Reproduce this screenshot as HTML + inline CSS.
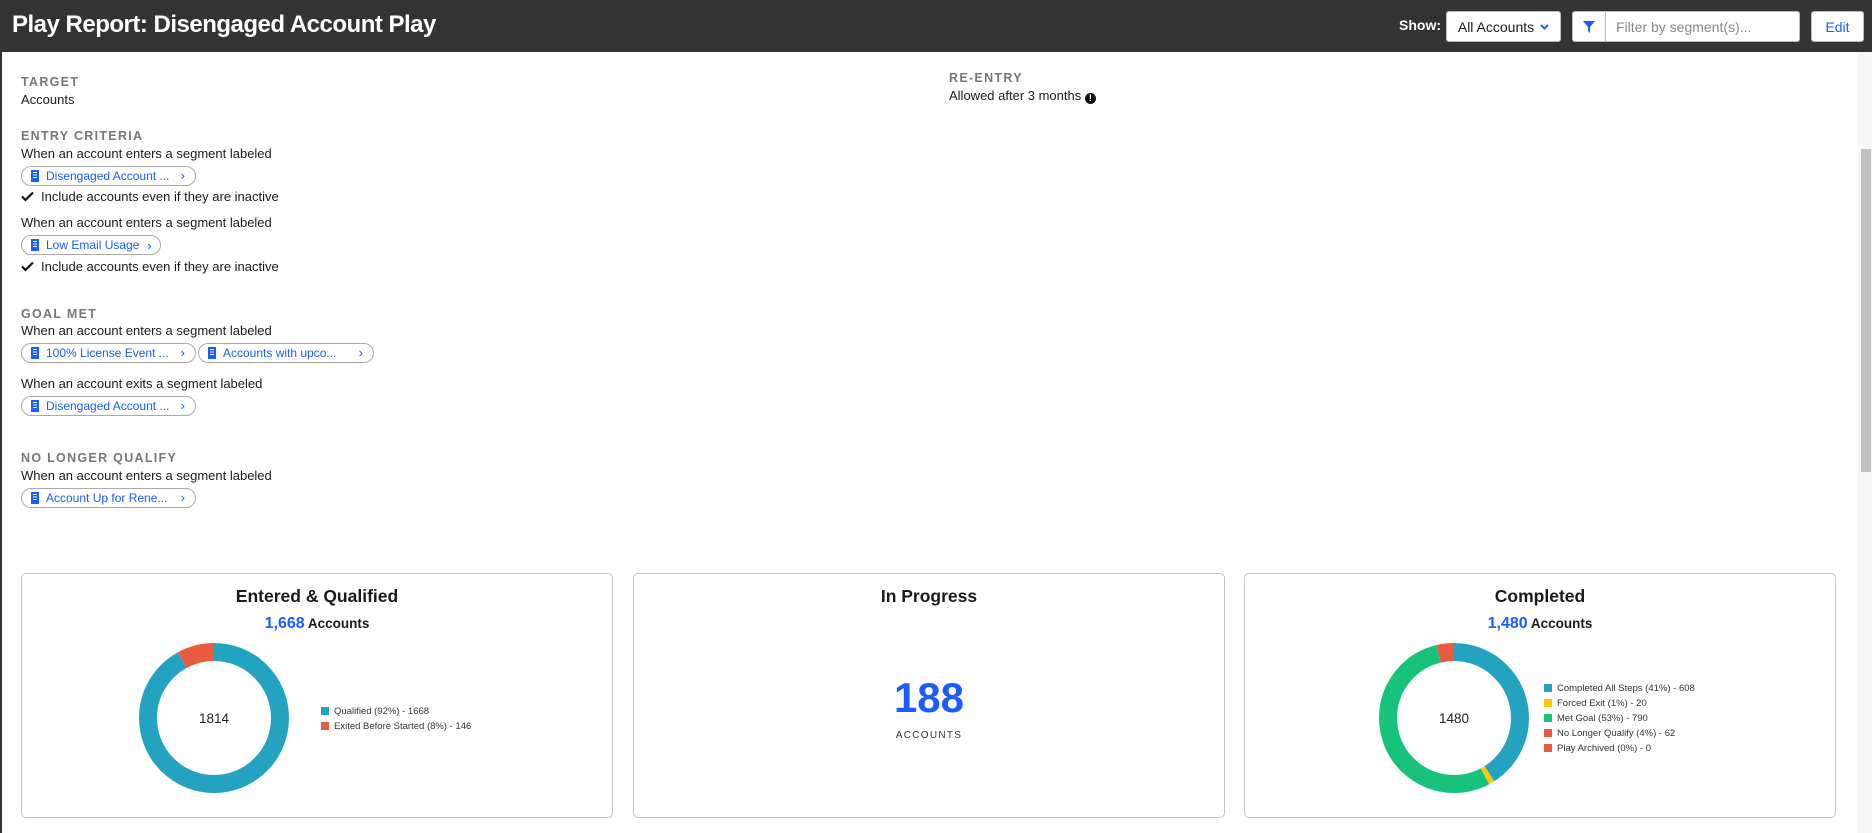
<!DOCTYPE html>
<html><head><meta charset="utf-8"><style>
*{box-sizing:border-box;margin:0;padding:0}
body{width:1872px;height:833px;overflow:hidden;background:#fff;font-family:"Liberation Sans",sans-serif;color:#1a1a1a;position:relative}
.hdr{position:absolute;left:0;top:0;width:1872px;height:52px;background:#333}
.title{position:absolute;left:12px;top:11px;color:#fff;font-size:24px;font-weight:bold;letter-spacing:-0.5px}
.show{position:absolute;left:1399px;top:17px;color:#fff;font-size:14px;font-weight:bold}
.btn{position:absolute;top:11px;height:31px;background:#fff;border:1px solid #bbb;border-radius:3px;font-size:14px;display:flex;align-items:center;justify-content:center}
.lbl{position:absolute;font-size:12.5px;letter-spacing:1.3px;color:#777;font-weight:bold}
.txt{position:absolute;font-size:13px;color:#1a1a1a}
.pill{position:absolute;height:20px;border:1px solid #aaa;border-radius:10px;font-size:12px;color:#1a5cff;display:flex;align-items:center;padding-left:9px}
.pill .ic{width:8px;height:12px;background:#1a5cff;margin-right:7px;position:relative}
.pill .ic:after{content:"";position:absolute;left:2px;top:2px;width:4px;height:7px;background:repeating-linear-gradient(#fff 0 1px,#1a5cff 1px 2.5px)}
.pill .ch{position:absolute;right:10px;top:1px;font-size:13px}
.pill .ch2{margin-left:8px;font-size:13px}
.ck{display:inline-block;vertical-align:-1px;margin-right:7px}
.card{position:absolute;top:573px;width:592px;height:245px;border:1px solid #c4c4c4;border-radius:5px}
.ct{position:absolute;top:12px;width:100%;text-align:center;font-size:17.5px;font-weight:bold}
.cs{position:absolute;top:41px;width:100%;text-align:center;font-size:13.5px;font-weight:bold}
.cs b{color:#1a5cff;font-size:16px}
.leg{position:absolute;font-size:9.5px;color:#333;line-height:15px}
.leg i{display:inline-block;width:8px;height:8px;margin-right:5px;vertical-align:-0.5px}
</style></head><body>
<div style="position:absolute;left:0;top:52px;width:2px;height:781px;background:#333"></div>
<div class="hdr">
<div class="title">Play Report: Disengaged Account Play</div>
<div class="show">Show:</div>
<div class="btn" style="left:1446px;width:115px">All Accounts <svg style="margin-left:6px" width="9" height="6" viewBox="0 0 9 6"><path d="M1 1L4.5 4.5L8 1" stroke="#1a5cff" stroke-width="2" fill="none"/></svg></div>
<div class="btn" style="left:1572px;width:228px;justify-content:flex-start">
<div style="width:33px;height:100%;border-right:1px solid #bbb;display:flex;align-items:center;justify-content:center"><svg width="12" height="12" viewBox="0 0 12 12"><path d="M0 0H12L7 6V12L5 10V6Z" fill="#1a5cff"/></svg></div>
<span style="color:#888;margin-left:10px">Filter by segment(s)...</span></div>
<div class="btn" style="left:1811px;width:53px;color:#1a5cff">Edit</div>
</div>
<div style="position:absolute;left:1858px;top:52px;width:14px;height:781px;background:#f6f6f6"></div>
<div style="position:absolute;left:1861px;top:149px;width:10px;height:323px;background:#c1c1c1"></div>

<div class="lbl" style="left:21px;top:75px">TARGET</div>
<div class="txt" style="left:21px;top:92px">Accounts</div>
<div class="lbl" style="left:949px;top:71px">RE-ENTRY</div>
<div class="txt" style="left:949px;top:88px">Allowed after 3 months <span style="display:inline-block;width:11px;height:11px;border-radius:50%;background:#111;color:#fff;font-size:9px;text-align:center;line-height:11px;font-weight:bold;vertical-align:-1px">!</span></div>

<div class="lbl" style="left:21px;top:129px">ENTRY CRITERIA</div>
<div class="txt" style="left:21px;top:146px">When an account enters a segment labeled</div>
<div class="pill" style="left:21px;top:166px;width:175px"><span class="ic"></span>Disengaged Account ...<span class="ch">&#8250;</span></div>
<div class="txt" style="left:21px;top:189px"><svg class="ck" width="13" height="11" viewBox="0 0 13 11"><path d="M1 5.5L4.5 9L12 1.5" stroke="#111" stroke-width="2.2" fill="none"/></svg>Include accounts even if they are inactive</div>
<div class="txt" style="left:21px;top:215px">When an account enters a segment labeled</div>
<div class="pill" style="left:21px;top:235px;width:140px"><span class="ic"></span>Low Email Usage<span class="ch2">&#8250;</span></div>
<div class="txt" style="left:21px;top:259px"><svg class="ck" width="13" height="11" viewBox="0 0 13 11"><path d="M1 5.5L4.5 9L12 1.5" stroke="#111" stroke-width="2.2" fill="none"/></svg>Include accounts even if they are inactive</div>

<div class="lbl" style="left:21px;top:307px">GOAL MET</div>
<div class="txt" style="left:21px;top:323px">When an account enters a segment labeled</div>
<div class="pill" style="left:21px;top:343px;width:175px"><span class="ic"></span>100% License Event ...<span class="ch">&#8250;</span></div>
<div class="pill" style="left:198px;top:343px;width:176px"><span class="ic"></span>Accounts with upco...<span class="ch">&#8250;</span></div>
<div class="txt" style="left:21px;top:376px">When an account exits a segment labeled</div>
<div class="pill" style="left:21px;top:396px;width:175px"><span class="ic"></span>Disengaged Account ...<span class="ch">&#8250;</span></div>

<div class="lbl" style="left:21px;top:451px">NO LONGER QUALIFY</div>
<div class="txt" style="left:21px;top:468px">When an account enters a segment labeled</div>
<div class="pill" style="left:21px;top:488px;width:175px"><span class="ic"></span>Account Up for Rene...<span class="ch">&#8250;</span></div>

<div class="card" style="left:21px">
<div class="ct">Entered &amp; Qualified</div>
<div class="cs"><b>1,668</b> Accounts</div>
<svg style="position:absolute;left:116px;top:68px" width="152" height="152" viewBox="0 0 152 152">
<g transform="rotate(-90 76 76)" fill="none" stroke-width="18">
<circle cx="76" cy="76" r="66" stroke="#24a3c0" stroke-dasharray="381.5 1000"/>
<circle cx="76" cy="76" r="66" stroke="#e95b3f" stroke-dasharray="0 381.5 33.2 1000"/>
</g>
<text x="76" y="81" text-anchor="middle" font-family="Liberation Sans" font-size="13.5" fill="#222">1814</text>
</svg>
<div class="leg" style="left:299px;top:130px"><i style="background:#24a3c0"></i>Qualified (92%) - 1668<br><i style="background:#e95b3f"></i>Exited Before Started (8%) - 146</div>
</div>

<div class="card" style="left:633px">
<div class="ct">In Progress</div>
<div style="position:absolute;top:100px;width:100%;text-align:center;font-size:42px;font-weight:bold;color:#1a5cff">188</div>
<div style="position:absolute;top:156px;width:100%;text-align:center;font-size:10px;letter-spacing:1.3px;color:#333">ACCOUNTS</div>
</div>

<div class="card" style="left:1244px">
<div class="ct">Completed</div>
<div class="cs"><b>1,480</b> Accounts</div>
<svg style="position:absolute;left:133px;top:68px" width="152" height="152" viewBox="0 0 152 152">
<g transform="rotate(-90 76 76)" fill="none" stroke-width="18">
<circle cx="76" cy="76" r="66" stroke="#24a3c0" stroke-dasharray="170 1000"/>
<circle cx="76" cy="76" r="66" stroke="#ffc800" stroke-dasharray="0 170 5 1000"/>
<circle cx="76" cy="76" r="66" stroke="#17c37b" stroke-dasharray="0 175 224 1000"/>
<circle cx="76" cy="76" r="66" stroke="#e95b3f" stroke-dasharray="0 399 16 1000"/>
</g>
<text x="76" y="81" text-anchor="middle" font-family="Liberation Sans" font-size="13.5" fill="#222">1480</text>
</svg>
<div class="leg" style="left:299px;top:107px"><i style="background:#24a3c0"></i>Completed All Steps (41%) - 608<br><i style="background:#ffc800"></i>Forced Exit (1%) - 20<br><i style="background:#17c37b"></i>Met Goal (53%) - 790<br><i style="background:#e95b3f"></i>No Longer Qualify (4%) - 62<br><i style="background:#e95b3f"></i>Play Archived (0%) - 0</div>
</div>
</body></html>
